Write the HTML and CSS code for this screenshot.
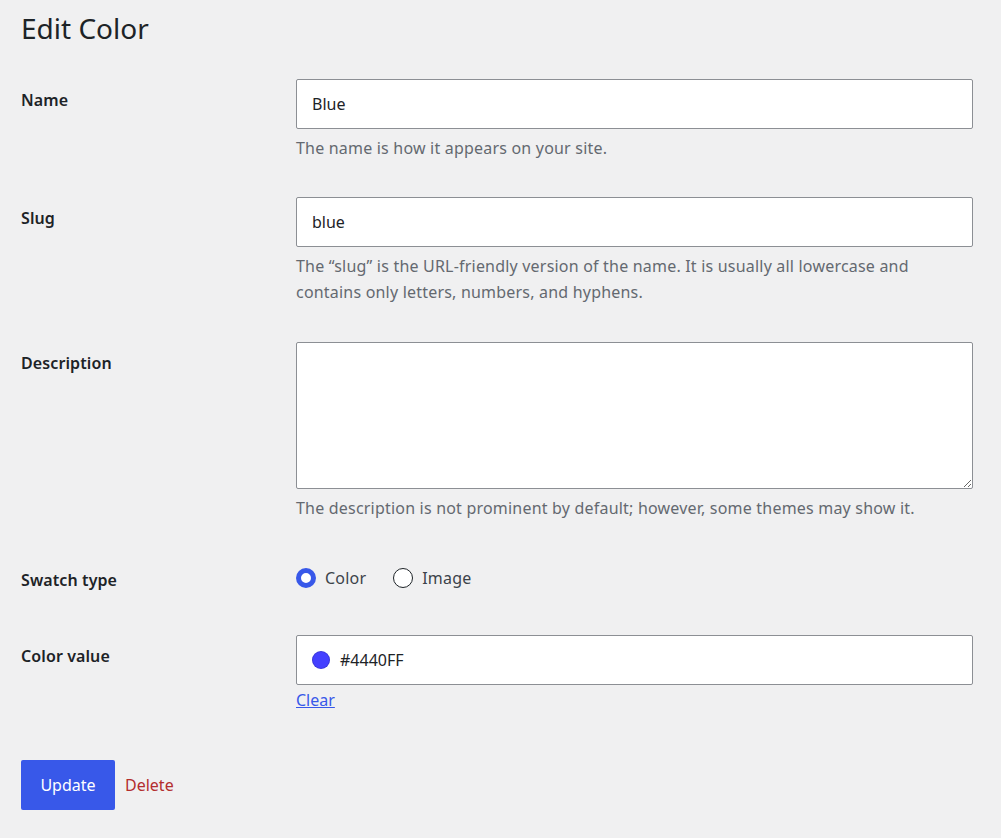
FILE: index.html
```html
<!doctype html>
<html lang="en">
	<head>
		<title>Edit Color</title>
		<meta charset="utf-8" />
		<link rel="stylesheet" href="styles.css">
	</head>
	<body>
		<div class="wrap">
			<h1>Edit Color</h1>

			<form class="term-form">
				<div class="row first">
					<label class="label" for="name">Name</label>
					<div class="field">
						<input class="text" id="name" type="text" value="Blue">
						<p class="desc">The name is how it appears on your site.</p>
					</div>
				</div>

				<div class="row">
					<label class="label" for="slug">Slug</label>
					<div class="field">
						<input class="text" id="slug" type="text" value="blue">
						<p class="desc">The &ldquo;slug&rdquo; is the URL-friendly version of the name. It is usually all lowercase and contains only letters, numbers, and hyphens.</p>
					</div>
				</div>

				<div class="row">
					<label class="label" for="description">Description</label>
					<div class="field">
						<textarea class="text area" id="description"></textarea>
						<p class="desc">The description is not prominent by default; however, some themes may show it.</p>
					</div>
				</div>

				<div class="row swatch-row">
					<span class="label">Swatch type</span>
					<div class="field radios">
						<label class="radio"><span class="dot checked"></span>Color</label>
						<label class="radio"><span class="dot"></span>Image</label>
					</div>
				</div>

				<div class="row">
					<label class="label" for="color">Color value</label>
					<div class="field">
						<div class="text color-box">
							<span class="swatch"></span>
							<span class="hex">#4440FF</span>
						</div>
						<a class="clear" href="#">Clear</a>
					</div>
				</div>

				<div class="actions">
					<button class="button" type="button">Update</button>
					<a class="delete" href="#">Delete</a>
				</div>
			</form>
		</div>
	</body>
</html>
```

FILE: styles.css
```css
body {
	margin: 0;
	background: #f0f0f1;
	color: #1d2327;
	font-family: "Noto Sans", sans-serif;
	font-size: 16px;
	line-height: 26px;
}

.wrap {
	padding: 0 28px 0 21px;
}

h1 {
	margin: 0;
	padding-top: 11px;
	height: 68px;
	font-size: 28px;
	font-weight: 400;
	line-height: 34px;
}

.row {
	display: flex;
	margin-bottom: 37px;
}

.row.first {
	margin-bottom: 36px;
}

.label {
	width: 275px;
	flex: none;
	padding-top: 8px;
	font-weight: 600;
	letter-spacing: 0.1px;
}

.swatch-row .label {
	padding-top: 9px;
}

.field {
	flex: 1;
}

.text {
	display: block;
	box-sizing: border-box;
	width: 100%;
	height: 50px;
	margin: 0;
	padding: 0 15px;
	border: 1px solid #8c8f94;
	border-radius: 2px;
	background: #fff;
	color: #1d2327;
	font-family: inherit;
	font-size: 16px;
}

.area {
	height: 147px;
	padding: 10px 15px;
	resize: vertical;
}

.desc {
	margin: 6px 0 0;
	color: #646970;
	letter-spacing: 0.2px;
}

.radios {
	display: flex;
	align-items: center;
	gap: 27px;
	height: 40px;
}

.radio {
	display: flex;
	align-items: center;
	gap: 9px;
	color: #3c434a;
	letter-spacing: 0.2px;
}

.dot {
	box-sizing: border-box;
	width: 20px;
	height: 20px;
	border-radius: 50%;
	border: 1px solid #1d2327;
	background: #fff;
}

.dot.checked {
	border: 5px solid #3858e9;
}

.color-box {
	display: flex;
	align-items: center;
	gap: 10px;
}

.swatch {
	width: 18px;
	height: 18px;
	border-radius: 50%;
	background: #4440ff;
	box-shadow: inset 0 0 0 1px rgba(0, 0, 0, 0.15);
}

.clear {
	display: inline-block;
	margin-top: 2px;
	color: #3858e9;
}

.actions {
	display: flex;
	align-items: center;
	gap: 10px;
	margin-top: 47px;
}

.button {
	width: 94px;
	height: 50px;
	padding: 0;
	border: 0;
	border-radius: 2px;
	background: #3858e9;
	color: #fff;
	font-family: inherit;
	font-size: 16px;
}

.delete {
	color: #b32d2e;
	text-decoration: none;
}
```
